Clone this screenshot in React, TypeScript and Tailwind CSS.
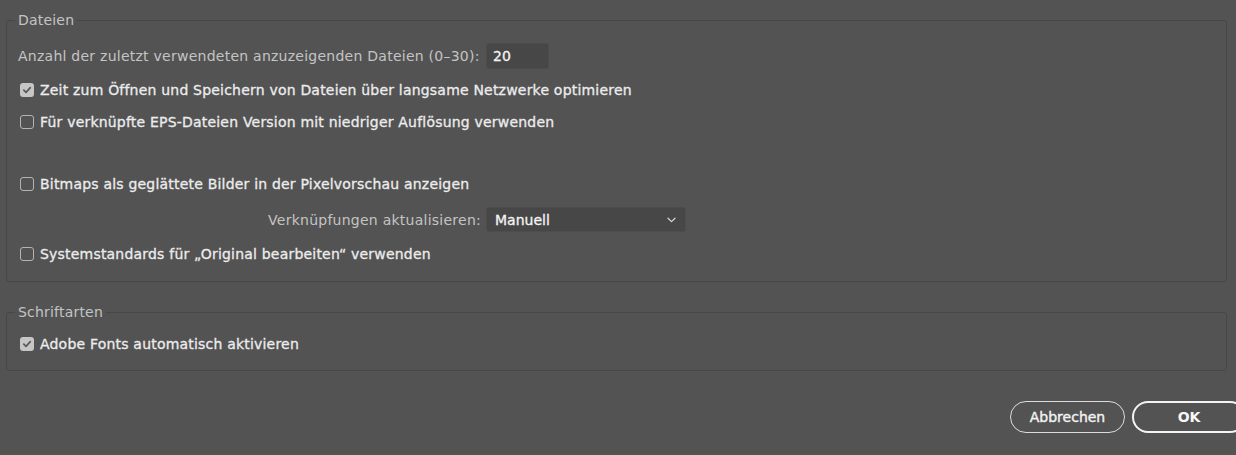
import React from "react";

function Checkbox({ checked }: { checked?: boolean }) {
  return checked ? (
    <span className="flex h-[14px] w-[14px] shrink-0 items-center justify-center rounded-[3px] bg-[#c6c6c6]">
      <svg width="10" height="10" viewBox="0 0 10 10" fill="none">
        <path d="M1.8 5.2 L4 7.4 L8.3 2.6" stroke="#5a5a5a" strokeWidth="1.7" strokeLinecap="round" strokeLinejoin="round" />
      </svg>
    </span>
  ) : (
    <span className="h-[14px] w-[14px] shrink-0 rounded-[3px] border border-[#b4b4b4]" />
  );
}

function CheckRow({ checked, label, className }: { checked?: boolean; label: string; className?: string }) {
  return (
    <div className={"flex h-[20px] items-center gap-[6px] pl-[2px] " + (className ?? "")}>
      <Checkbox checked={checked} />
      <span className="whitespace-nowrap tracking-[0.2px] text-[#ececec] [-webkit-text-stroke:0.3px_currentColor]">{label}</span>
    </div>
  );
}

export default function App() {
  return (
    <div
      className="h-[455px] w-[1236px] overflow-hidden bg-[#535353] text-[14px] leading-[16px]"
      style={{ fontFamily: '"DejaVu Sans", "Liberation Sans", sans-serif' }}
    >
      <fieldset className="ml-[6px] mt-[12px] w-[1221px] rounded-[3px] border border-[#474747] pb-[17px] pl-[11px] pt-[15px]">
        <legend className="-ml-[3px] px-[3px] tracking-[0.2px] text-[#c4c4c4]">Dateien</legend>
        <div className="flex h-[26px] items-center">
          <span className="w-[468px] whitespace-nowrap tracking-[0.25px] text-[#c4c4c4]">Anzahl der zuletzt verwendeten anzuzeigenden Dateien (0–30):</span>
          <div className="flex h-[26px] w-[63px] items-center rounded-[3px] border border-[#4d4d4d] bg-[#474747] pl-[6px] text-[#f4f4f4] [-webkit-text-stroke:0.3px_currentColor]">
            20
          </div>
        </div>
        <CheckRow className="mt-[11px]" checked label="Zeit zum Öffnen und Speichern von Dateien über langsame Netzwerke optimieren" />
        <CheckRow className="mt-[12px]" label="Für verknüpfte EPS-Dateien Version mit niedriger Auflösung verwenden" />
        <CheckRow className="mt-[42px]" label="Bitmaps als geglättete Bilder in der Pixelvorschau anzeigen" />
        <div className="mt-[13px] flex h-[25px] items-center">
          <span className="w-[468px] whitespace-nowrap pr-[5px] text-right tracking-[0.25px] text-[#c4c4c4]">Verknüpfungen aktualisieren:</span>
          <div className="flex h-[25px] w-[200px] items-center justify-between rounded-[3px] border border-[#4d4d4d] bg-[#474747] pl-[8px] pr-[9px] text-[#f4f4f4]">
            <span className="[-webkit-text-stroke:0.3px_currentColor]">Manuell</span>
            <svg width="9" height="6" viewBox="0 0 9 6" fill="none">
              <path d="M1 1.2 L4.5 4.6 L8 1.2" stroke="#d8d8d8" strokeWidth="1.2" strokeLinecap="round" strokeLinejoin="round" />
            </svg>
          </div>
        </div>
        <CheckRow className="mt-[12px]" label="Systemstandards für „Original bearbeiten“ verwenden" />
      </fieldset>

      <fieldset className="ml-[6px] mt-[22px] w-[1221px] rounded-[3px] border border-[#474747] pb-[16px] pl-[11px] pt-[14px]">
        <legend className="-ml-[3px] px-[3px] tracking-[0.2px] text-[#c4c4c4]">Schriftarten</legend>
        <CheckRow checked label="Adobe Fonts automatisch aktivieren" />
      </fieldset>

      <div className="mt-[30px] flex justify-end gap-[7px]">
        <button className="flex h-[32px] w-[115px] items-center justify-center rounded-full border border-[#dcdcdc] text-[14px] text-[#f2f2f2] [-webkit-text-stroke:0.4px_currentColor]">
          Abbrechen
        </button>
        <button className="-mr-[10px] flex h-[32px] w-[114px] items-center justify-center rounded-full border-2 border-[#f4f4f4] text-[14px] font-bold text-[#f8f8f8]">
          OK
        </button>
      </div>
    </div>
  );
}
